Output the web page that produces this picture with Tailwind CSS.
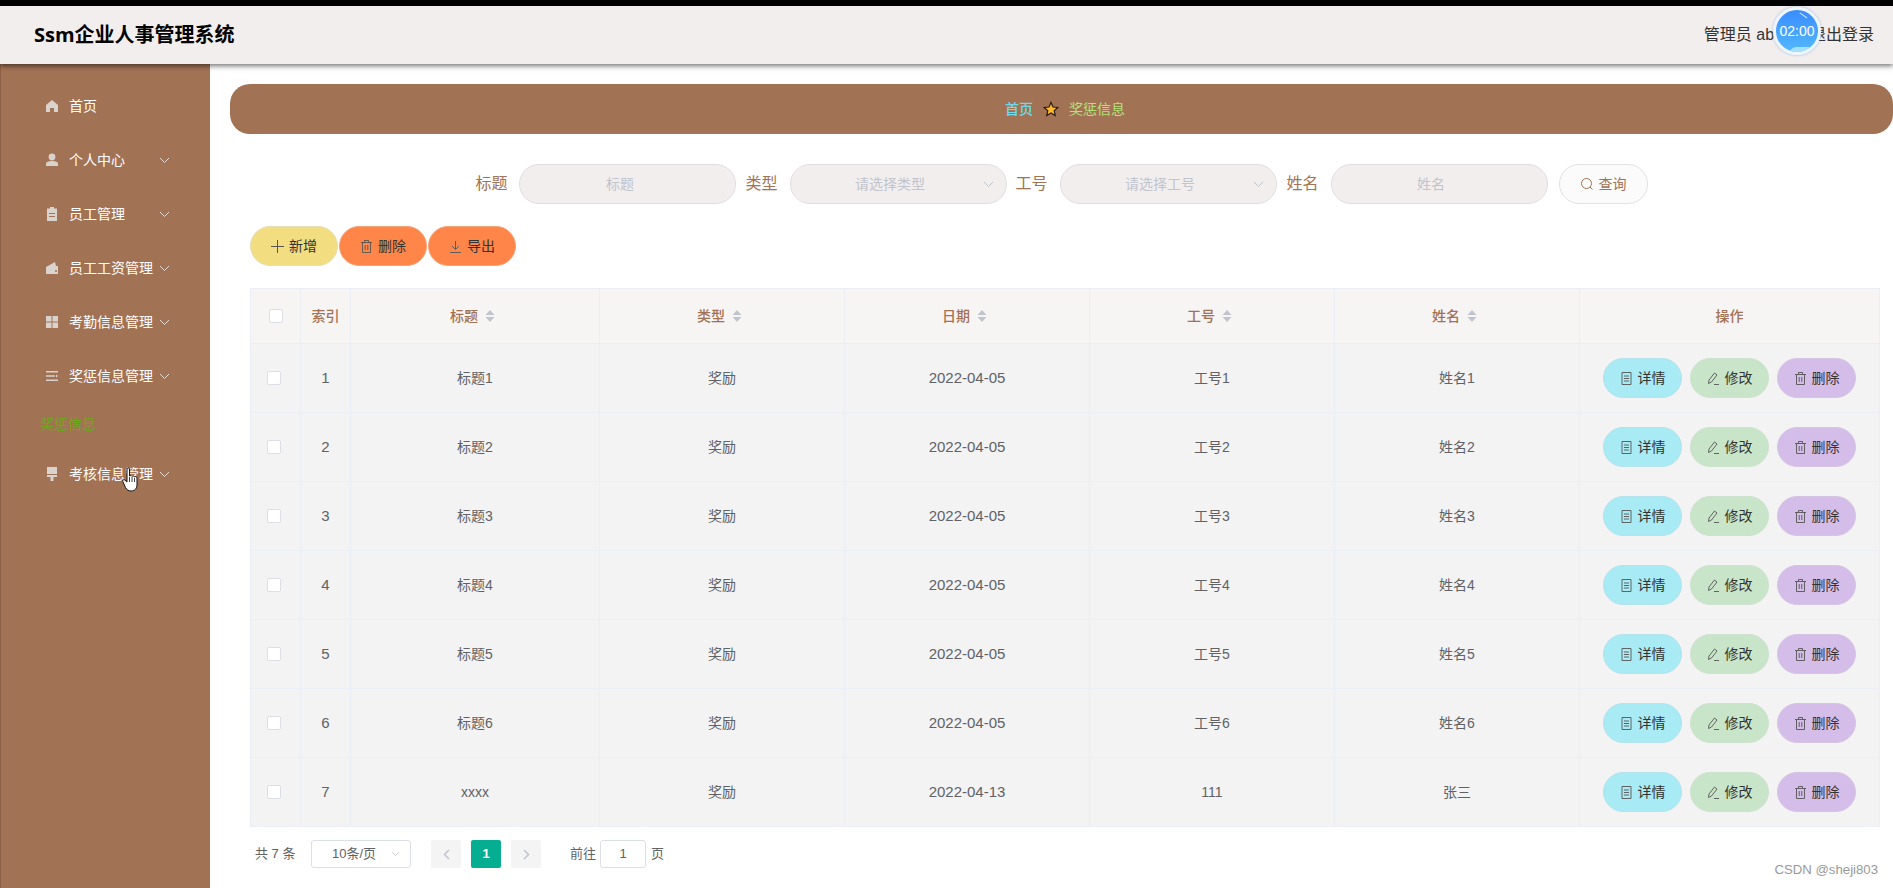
<!DOCTYPE html>
<html lang="zh-CN">
<head>
  <meta charset="UTF-8" />
  <title>Ssm企业人事管理系统</title>
  <script src="https://cdn.jsdelivr.net/npm/@tailwindcss/browser@4"></script>
</head>
<body class="h-[888px] w-[1893px] overflow-hidden bg-white font-['Liberation_Sans','Noto_Sans_CJK_SC',sans-serif] text-[#606266] flex flex-col relative">
  <div class="h-1.5 bg-black shrink-0"></div>

  <!-- HEADER -->
  <header class="relative z-10 h-[58px] shrink-0 bg-[#f3eeee] shadow-[0_2px_5px_rgba(0,0,0,.55)] flex items-center justify-between pl-[34px] pr-[19px]">
    <h1 class="text-[20px] font-bold text-black font-['Open_Sans','Noto_Sans_CJK_SC',sans-serif]">Ssm企业人事管理系统</h1>
    <div class="flex items-center text-[16px] text-[#333] gap-[27px]">
      <span>管理员 abo</span>
      <span>退出登录</span>
    </div>
  </header>

  <!-- TIMER -->
  <div class="absolute z-20 left-[1773px] top-[7px] w-12 h-12 rounded-full border-[3px] border-[#eef6fc] shadow-[0_0_3px_rgba(110,160,210,.7)] bg-gradient-to-b from-[#3a8cff] to-[#55b8ff] flex items-center justify-center text-[14px] text-white overflow-hidden">
    <span>02:00</span>
    <span class="absolute -bottom-[7px] right-0 w-7 h-3 rounded-full bg-[#a5e0ff]"></span>
    <span class="absolute top-[5px] right-[10px] w-[9px] h-px rotate-[35deg] bg-white/80"></span>
  </div>

  <div class="flex flex-1 min-h-0">
    <!-- SIDEBAR -->
    <aside class="w-[210px] shrink-0 bg-[#a27254] border-l border-[#8a5f45] pt-[15px] text-[14px] text-white">
      <a class="h-[54px] flex items-center pl-[44px]">
        <svg class="w-[14px] h-[14px] mr-[10px] text-[#d9d2cd]" viewBox="0 0 14 14" fill="currentColor"><path d="M7 1 13 6v7H9V9H5v4H1V6z"/></svg>
        <span>首页</span>
      </a>
      <a class="h-[54px] flex items-center pl-[44px]">
        <svg class="w-[14px] h-[14px] mr-[10px] text-[#d9d2cd]" viewBox="0 0 14 14" fill="currentColor"><circle cx="7" cy="4" r="3.4"/><path d="M1 13v-2c0-2 2-3 6-3s6 1 6 3v2z"/></svg>
        <span class="w-[90px]">个人中心</span>
        <svg class="w-[11px] h-[7px] text-[#e6dcd5]" viewBox="0 0 11 7" fill="none" stroke="currentColor"><path d="m1 1 4.500 4.500L10 1"/></svg>
      </a>
      <a class="h-[54px] flex items-center pl-[44px]">
        <svg class="w-[14px] h-[14px] mr-[10px] text-[#d9d2cd]" viewBox="0 0 14 14" fill="currentColor"><path fill-rule="evenodd" d="M5 0h4v1.500h3V14H2V1.500h3zM4 6v1h6V6zm0 3v1h6V9z"/></svg>
        <span class="w-[90px]">员工管理</span>
        <svg class="w-[11px] h-[7px] text-[#e6dcd5]" viewBox="0 0 11 7" fill="none" stroke="currentColor"><path d="m1 1 4.500 4.500L10 1"/></svg>
      </a>
      <a class="h-[54px] flex items-center pl-[44px]">
        <svg class="w-[14px] h-[14px] mr-[10px] text-[#d9d2cd]" viewBox="0 0 14 14" fill="currentColor"><path fill-rule="evenodd" d="M1 6 10 1l1 4h2v8H1zm10 3a1 1 0 1 0 0 2 1 1 0 0 0 0-2z"/></svg>
        <span class="w-[90px]">员工工资管理</span>
        <svg class="w-[11px] h-[7px] text-[#e6dcd5]" viewBox="0 0 11 7" fill="none" stroke="currentColor"><path d="m1 1 4.500 4.500L10 1"/></svg>
      </a>
      <a class="h-[54px] flex items-center pl-[44px]">
        <svg class="w-[14px] h-[14px] mr-[10px] text-[#d9d2cd]" viewBox="0 0 14 14" fill="currentColor"><path d="M1 1h5.500v5.500H1zM7.500 1H13v5.500H7.500zM1 7.500h5.500V13H1zM7.500 7.500H13V13H7.500z"/></svg>
        <span class="w-[90px]">考勤信息管理</span>
        <svg class="w-[11px] h-[7px] text-[#e6dcd5]" viewBox="0 0 11 7" fill="none" stroke="currentColor"><path d="m1 1 4.500 4.500L10 1"/></svg>
      </a>
      <a class="h-[54px] flex items-center pl-[44px]">
        <svg class="w-[14px] h-[14px] mr-[10px] text-[#d9d2cd]" viewBox="0 0 14 14" fill="currentColor"><path d="M1 2h12v1.500H1zM1 6.200h9v1.500H1zM1 10.500h12V12H1zM11 5.500 13 7l-2 1.500z"/></svg>
        <span class="w-[90px]">奖惩信息管理</span>
        <svg class="w-[11px] h-[7px] text-[#e6dcd5]" viewBox="0 0 11 7" fill="none" stroke="currentColor"><path d="m1 1 4.500 4.500L10 1"/></svg>
      </a>
      <a class="h-11 flex items-center pl-[39px] pb-0.5 text-[#6fa81c]">奖惩信息</a>
      <a class="h-[54px] flex items-center pl-[44px]">
        <svg class="w-[14px] h-[14px] mr-[10px] text-[#d9d2cd]" viewBox="0 0 14 14" fill="currentColor"><path d="M2 0h10v7H2zM2 8h10v2H8.500v4h-3v-4H2z"/></svg>
        <span class="w-[90px]">考核信息管理</span>
        <svg class="w-[11px] h-[7px] text-[#e6dcd5]" viewBox="0 0 11 7" fill="none" stroke="currentColor"><path d="m1 1 4.500 4.500L10 1"/></svg>
      </a>
    </aside>

    <!-- MAIN -->
    <main class="flex-1 min-w-0 pt-5">
      <nav class="ml-5 h-[50px] rounded-[20px] bg-[#a27254] flex items-center justify-center text-[14px] pl-[7px]">
        <span class="font-medium text-[#73d8ea]">首页</span>
        <svg class="w-4 h-4 mx-[10px]" viewBox="0 0 16 16"><path d="M8 1.500 10 6l4.800.5-3.600 3.200 1 4.800L8 12l-4.200 2.500 1-4.800L1.200 6.500 6 6z" fill="#ffb92e" stroke="#2b1a10" stroke-width="1.200"/></svg>
        <span class="text-[#b4e27a]">奖惩信息</span>
      </nav>

      <!-- SEARCH -->
      <div class="mt-[30px] h-10 flex items-center justify-center pl-[20px] text-[16px] text-[#a27254]">
        <label class="mr-[12px]">标题</label>
        <div class="w-[217px] h-10 rounded-[20px] bg-[#f3eeee] border border-[#dfdfe3] flex items-center justify-center pr-4 text-[14px] text-[#c0c4cc]">标题</div>
        <label class="ml-[9px] mr-[12px]">类型</label>
        <div class="relative w-[217px] h-10 rounded-[20px] bg-[#f3eeee] border border-[#dfdfe3] flex items-center justify-center pr-4 text-[14px] text-[#c0c4cc]">
          请选择类型
          <svg class="absolute right-[12px] top-[16px] w-[11px] h-[7px] text-[#c0c4cc]" viewBox="0 0 11 7" fill="none" stroke="currentColor"><path d="m1 1 4.500 4.500L10 1"/></svg>
        </div>
        <label class="ml-[9px] mr-[12px]">工号</label>
        <div class="relative w-[217px] h-10 rounded-[20px] bg-[#f3eeee] border border-[#dfdfe3] flex items-center justify-center pr-4 text-[14px] text-[#c0c4cc]">
          请选择工号
          <svg class="absolute right-[12px] top-[16px] w-[11px] h-[7px] text-[#c0c4cc]" viewBox="0 0 11 7" fill="none" stroke="currentColor"><path d="m1 1 4.500 4.500L10 1"/></svg>
        </div>
        <label class="ml-[10px] mr-[12px]">姓名</label>
        <div class="w-[217px] h-10 rounded-[20px] bg-[#f3eeee] border border-[#dfdfe3] flex items-center justify-center pr-4 text-[14px] text-[#c0c4cc]">姓名</div>
        <button class="ml-[11px] w-[89px] h-10 rounded-[20px] bg-[#fcfbfb] border border-[#e2e2e4] flex items-center justify-center gap-[5px] text-[14px]">
          <svg class="w-[14px] h-[14px]" viewBox="0 0 14 14" fill="none" stroke="currentColor"><circle cx="6.500" cy="6.500" r="5"/><path d="m10 10 2.500 2.500"/></svg>
          查询
        </button>
      </div>

      <!-- ACTIONS -->
      <div class="mt-[22px] ml-10 h-10 flex items-center gap-px text-[14px] text-[#333]">
        <button class="w-[88px] h-10 rounded-[20px] bg-[#f2dd80] border border-[#e5dfb5] flex items-center justify-center gap-[5px]">
          <svg class="w-[13px] h-[13px] text-[#555]" viewBox="0 0 13 13" fill="none" stroke="currentColor"><path d="M6.500 0v13M0 6.500h13"/></svg>
          新增
        </button>
        <button class="w-[88px] h-10 rounded-[20px] bg-[#ff8548] border border-[#f3a47a] flex items-center justify-center gap-[5px]">
          <svg class="w-[13px] h-[13px] text-[#555]" viewBox="0 0 13 13" fill="none" stroke="currentColor" stroke-width=".9"><path d="M1 2.500h11M4.500 2.500V.5h4v2M2.500 2.500v10h8v-10M5.200 5v5M7.800 5v5"/></svg>
          删除
        </button>
        <button class="w-[88px] h-10 rounded-[20px] bg-[#ff8548] border border-[#f3a47a] flex items-center justify-center gap-[5px]">
          <svg class="w-[13px] h-[13px] text-[#555]" viewBox="0 0 13 13" fill="none" stroke="currentColor" stroke-width=".9"><path d="M6.500 1v8M3 6l3.500 3.500L10 6M1 12.500h11"/></svg>
          导出
        </button>
      </div>

      <!-- TABLE -->
      <table class="mt-[22px] ml-10 w-[1629px] table-fixed border-collapse text-[14px]">
        <colgroup>
          <col class="w-[50px]" /><col class="w-[50px]" /><col class="w-[249px]" /><col class="w-[245px]" /><col class="w-[245px]" /><col class="w-[245px]" /><col class="w-[245px]" /><col class="w-[300px]" />
        </colgroup>
        <thead>
          <tr class="h-[55px] bg-[#f7f4f4] text-[#a27254]">
            <th class="border border-[#ebeef5] font-medium"><span class="block w-[14px] h-[14px] ml-[18px] bg-white border border-[#dcdfe6] rounded-[2px]"></span></th>
            <th class="border border-[#ebeef5] font-medium">索引</th>
            <th class="border border-[#ebeef5] font-medium pr-[5px]">标题 <svg class="inline-block align-[-2px] ml-[3px] w-[10px] h-[14px] text-[#c0c4cc]" viewBox="0 0 10 14" fill="currentColor"><path d="M5 1l4.500 5h-9zM5 13 .5 8h9z"/></svg></th>
            <th class="border border-[#ebeef5] font-medium pr-[5px]">类型 <svg class="inline-block align-[-2px] ml-[3px] w-[10px] h-[14px] text-[#c0c4cc]" viewBox="0 0 10 14" fill="currentColor"><path d="M5 1l4.500 5h-9zM5 13 .5 8h9z"/></svg></th>
            <th class="border border-[#ebeef5] font-medium pr-[5px]">日期 <svg class="inline-block align-[-2px] ml-[3px] w-[10px] h-[14px] text-[#c0c4cc]" viewBox="0 0 10 14" fill="currentColor"><path d="M5 1l4.500 5h-9zM5 13 .5 8h9z"/></svg></th>
            <th class="border border-[#ebeef5] font-medium pr-[5px]">工号 <svg class="inline-block align-[-2px] ml-[3px] w-[10px] h-[14px] text-[#c0c4cc]" viewBox="0 0 10 14" fill="currentColor"><path d="M5 1l4.500 5h-9zM5 13 .5 8h9z"/></svg></th>
            <th class="border border-[#ebeef5] font-medium pr-[5px]">姓名 <svg class="inline-block align-[-2px] ml-[3px] w-[10px] h-[14px] text-[#c0c4cc]" viewBox="0 0 10 14" fill="currentColor"><path d="M5 1l4.500 5h-9zM5 13 .5 8h9z"/></svg></th>
            <th class="border border-[#ebeef5] font-medium">操作</th>
          </tr>
        </thead>
        <tbody id="rows"></tbody>
      </table>

      <!-- PAGINATION -->
      <div class="mt-[13px] ml-[45px] h-7 flex items-center text-[13px] text-[#606266]">
        <span class="w-[56px]">共 7 条</span>
        <div class="relative w-[100px] h-7 border border-[#dcdfe6] rounded-[3px] flex items-center pl-5">
          10条/页
          <svg class="absolute right-[10px] top-[10px] w-[9px] h-[6px] text-[#c0c4cc]" viewBox="0 0 11 7" fill="none" stroke="currentColor"><path d="m1 1 4.500 4.500L10 1"/></svg>
        </div>
        <button class="ml-5 w-[30px] h-7 rounded-[2px] bg-[#f4f4f5] flex items-center justify-center">
          <svg class="w-[7px] h-[11px] text-[#c0c4cc]" viewBox="0 0 7 11" fill="none" stroke="currentColor" stroke-width="1.500"><path d="M6 1 1.500 5.500 6 10"/></svg>
        </button>
        <button class="ml-[10px] w-[30px] h-7 rounded-[2px] bg-[#05ad91] text-white font-bold">1</button>
        <button class="ml-[10px] w-[30px] h-7 rounded-[2px] bg-[#f4f4f5] flex items-center justify-center">
          <svg class="w-[7px] h-[11px] text-[#c0c4cc]" viewBox="0 0 7 11" fill="none" stroke="currentColor" stroke-width="1.500"><path d="M1 1l4.500 4.500L1 10"/></svg>
        </button>
        <span class="ml-[29px]">前往</span>
        <div class="ml-1 w-[46px] h-7 border border-[#dcdfe6] rounded-[3px] flex items-center justify-center">1</div>
        <span class="ml-[5px]">页</span>
      </div>
    </main>
  </div>

  <!-- CURSOR -->
  <svg class="absolute z-20 left-[122px] top-[467px] w-[18px] h-[26px]" viewBox="0 0 18 26">
    <path d="M5 2c0-1.500 2.500-1.500 2.500 0v7c1-.8 2.200-.5 2.500.3.800-.6 2.200-.4 2.500.5 1-.5 2.500-.2 2.500 1.200v7c0 3-2 6-5.500 6-3 0-4.500-1-6-3.500L.8 14.500c-.7-1.500 1-2.500 2.200-1.300L5 15z" fill="#fff" stroke="#111" stroke-width="1"/>
    <path d="M7.500 10v5M10 10v5M12.500 11v4" stroke="#111" stroke-width=".8"/>
  </svg>

  <div class="absolute right-[15px] bottom-[8px] text-[13.2px] text-[#999]">CSDN @sheji803</div>

  <script>
    // 列表假資料
    const data = [
      { title: '标题1', date: '2022-04-05', no: '工号1', name: '姓名1' },
      { title: '标题2', date: '2022-04-05', no: '工号2', name: '姓名2' },
      { title: '标题3', date: '2022-04-05', no: '工号3', name: '姓名3' },
      { title: '标题4', date: '2022-04-05', no: '工号4', name: '姓名4' },
      { title: '标题5', date: '2022-04-05', no: '工号5', name: '姓名5' },
      { title: '标题6', date: '2022-04-05', no: '工号6', name: '姓名6' },
      { title: 'xxxx', date: '2022-04-13', no: '111', name: '张三' },
    ];

    const td = 'border border-[#ebeef5] text-center';
    document.getElementById('rows').innerHTML = data.map((r, i) => `
      <tr class="h-[69px] bg-[#f3f3f4]">
        <td class="border border-[#ebeef5]"><span class="block w-[14px] h-[14px] ml-[16px] bg-white border border-[#dcdfe6] rounded-[2px]"></span></td>
        <td class="${td} text-[15px]">${i + 1}</td>
        <td class="${td}">${r.title}</td>
        <td class="${td}">奖励</td>
        <td class="${td} text-[15px]">${r.date}</td>
        <td class="${td}">${r.no}</td>
        <td class="${td}">${r.name}</td>
        <td class="border border-[#ebeef5]">
          <div class="flex items-center gap-2 pl-[23px] text-[#333]">
            <button class="w-[79px] h-10 rounded-[20px] bg-[#a8ebf5] border border-[#b5e3ec] flex items-center justify-center gap-[5px]">
              <svg class="w-[13px] h-[13px] text-[#555]" viewBox="0 0 13 13" fill="none" stroke="currentColor" stroke-width=".9"><path d="M2 .5h9v12H2zM4 4h5M4 6.500h5M4 9h5"/></svg>详情
            </button>
            <button class="w-[79px] h-10 rounded-[20px] bg-[#c9e5c9] border border-[#cfe2cf] flex items-center justify-center gap-[5px]">
              <svg class="w-[13px] h-[13px] text-[#555]" viewBox="0 0 13 13" fill="none" stroke="currentColor" stroke-width=".9"><path d="M1.500 11.500 2 8l5.500-7 2.500 2-5.500 7zM7 12.500h5"/></svg>修改
            </button>
            <button class="w-[79px] h-10 rounded-[20px] bg-[#d4bde8] border border-[#d5c5e4] flex items-center justify-center gap-[5px]">
              <svg class="w-[13px] h-[13px] text-[#555]" viewBox="0 0 13 13" fill="none" stroke="currentColor" stroke-width=".9"><path d="M1 2.500h11M4.500 2.500V.5h4v2M2.500 2.500v10h8v-10M5.200 5v5M7.800 5v5"/></svg>删除
            </button>
          </div>
        </td>
      </tr>`).join('');
  </script>
</body>
</html>
